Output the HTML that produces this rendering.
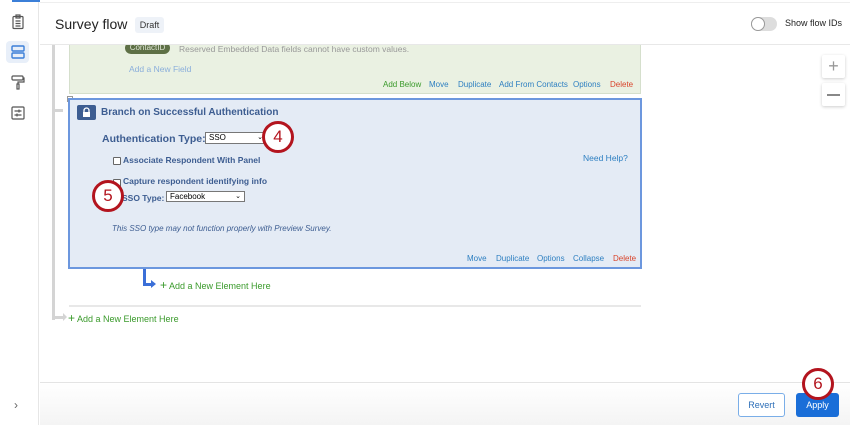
<!DOCTYPE html>
<html><head><style>
*{margin:0;padding:0;box-sizing:border-box}
body{width:850px;height:425px;overflow:hidden;background:#fff;font-family:"Liberation Sans",sans-serif;position:relative}
.abs{position:absolute}
.link{color:#2d7fc1;font-size:8px}
.circ{position:absolute;width:32px;height:32px;border:3px solid #b3141e;border-radius:50%;background:#fff;color:#b3141e;font-size:17px;text-align:center;line-height:26px}
</style></head><body>
<div class="abs" style="left:0;top:0;width:39px;height:425px;border-right:1px solid #e6e6e6;background:#fff"></div>
<div class="abs" style="left:12px;top:0;width:28px;height:2px;background:#3b7fd8"></div>
<div class="abs" style="left:40px;top:2px;width:810px;height:1px;background:#eee"></div>
<svg class="abs" style="left:10px;top:14px" width="16" height="16" viewBox="0 0 16 16" fill="none" stroke="#555" stroke-width="1.2"><rect x="3" y="2.5" width="10" height="12" rx="1"/><rect x="6" y="1" width="4" height="3"/><path d="M5.5 7h5M5.5 9.5h5M5.5 12h5"/></svg>
<div class="abs" style="left:6px;top:41px;width:23px;height:22px;background:#e8eff9;border-radius:4px"></div>
<svg class="abs" style="left:10px;top:44px" width="16" height="16" viewBox="0 0 16 16" fill="none" stroke="#3b7fd8" stroke-width="1.4"><rect x="2" y="2" width="12" height="5" rx="1"/><rect x="2" y="9" width="12" height="5" rx="1"/></svg>
<svg class="abs" style="left:10px;top:74px" width="16" height="16" viewBox="0 0 16 16" fill="none" stroke="#555" stroke-width="1.2"><rect x="2" y="2" width="11" height="4" rx="1"/><path d="M13 4h1v4H8v2"/><rect x="7" y="10" width="2" height="5"/></svg>
<svg class="abs" style="left:10px;top:105px" width="16" height="16" viewBox="0 0 16 16" fill="none" stroke="#555" stroke-width="1.2"><rect x="2" y="2" width="12" height="12" rx="1"/><path d="M4.5 6h7M4.5 10h7M9 4.5v3M7 8.5v3"/></svg>
<div class="abs" style="left:14px;top:398px;font-size:12px;color:#666">›</div>
<div class="abs" style="left:40px;top:3px;width:810px;height:42px;border-bottom:1px solid #e8e8e8;background:#fff;z-index:2">
<div class="abs" style="left:15px;top:13px;font-size:14px;color:#222">Survey flow</div>
<div class="abs" style="left:95px;top:14px;width:29px;height:16px;background:#eef2f8;border-radius:3px;font-size:9px;color:#333;text-align:center;line-height:16px">Draft</div>
<div class="abs" style="left:711px;top:14px;width:26px;height:14px;background:#ddd;border-radius:7px"></div>
<div class="abs" style="left:711px;top:14px;width:14px;height:14px;background:#fff;border:1px solid #999;border-radius:50%"></div>
<div class="abs" style="left:745px;top:15px;font-size:9px;color:#222">Show flow IDs</div>
</div>
<div class="abs" style="left:52px;top:45px;width:3px;height:275px;background:#d4d4d4"></div>
<div class="abs" style="left:55px;top:316px;width:8px;height:3px;background:#d4d4d4"></div>
<div class="abs" style="left:55px;top:109px;width:8px;height:3px;background:#d4d4d4"></div>
<div class="abs" style="left:69px;top:305px;width:572px;height:2px;background:#e8e8e8"></div>
<div class="abs" style="left:69px;top:40px;width:572px;height:54px;background:#eaf1e2;border:1px solid #d5dfcc">
<div class="abs" style="left:55px;top:1px;width:45px;height:12px;background:#5e7046;border-radius:6px;color:#dfe6d5;font-size:8px;text-align:center;line-height:12px">ContactID</div>
<div class="abs" style="left:109px;top:3px;font-size:8.5px;color:#999">Reserved Embedded Data fields cannot have custom values.</div>
<div class="abs" style="left:59px;top:23px;font-size:8.5px;color:#8aaedb">Add a New Field</div>
<div class="abs" style="left:313px;top:39px;font-size:8px;color:#3a9a2b">Add Below</div>
<div class="abs link" style="left:359px;top:39px">Move</div>
<div class="abs link" style="left:388px;top:39px">Duplicate</div>
<div class="abs link" style="left:429px;top:39px">Add From Contacts</div>
<div class="abs link" style="left:503px;top:39px">Options</div>
<div class="abs" style="left:540px;top:39px;font-size:8px;color:#d9442b">Delete</div>
</div>
<div class="abs" style="left:67px;top:96px;width:6px;height:6px;border:1px solid #999;background:#fff"></div>
<div class="abs" style="left:68px;top:98px;width:574px;height:171px;background:#e4ebf5;border:2px solid #6c97de">
<div class="abs" style="left:7px;top:5px;width:19px;height:15px;background:#3d5d91;border-radius:2px"></div>
<svg class="abs" style="left:11px;top:7px" width="11" height="11" viewBox="0 0 11 11"><path d="M3 5V3.5a2.5 2.5 0 0 1 5 0V5" stroke="#fff" fill="none" stroke-width="1.3"/><rect x="2" y="5" width="7" height="5" fill="#fff"/></svg>
<div class="abs" style="left:31px;top:7px;font-size:10px;font-weight:bold;color:#3d5d91">Branch on Successful Authentication</div>
<div class="abs" style="left:32px;top:33px;font-size:10.5px;font-weight:bold;color:#3d5d91">Authentication Type:</div>
<div class="abs" style="left:135px;top:32px;width:62px;height:12px;background:#fff;border:1px solid #777;font-size:8px;padding-left:3px;line-height:10px">SSO<span style="position:absolute;right:3px;font-size:7px">⌄</span></div>
<div class="abs" style="left:43px;top:57px;width:8px;height:8px;border:1px solid #666;background:#fff;border-radius:1px"></div>
<div class="abs" style="left:53px;top:55px;font-size:8.5px;font-weight:bold;color:#3d5d91">Associate Respondent With Panel</div>
<div class="abs link" style="left:513px;top:53px;font-size:8.5px">Need Help?</div>
<div class="abs" style="left:43px;top:79px;width:8px;height:8px;border:1px solid #666;background:#fff;border-radius:1px"></div>
<div class="abs" style="left:53px;top:76px;font-size:8.5px;font-weight:bold;color:#3d5d91">Capture respondent identifying info</div>
<div class="abs" style="left:52px;top:93px;font-size:8.5px;font-weight:bold;color:#3d5d91">SSO Type:</div>
<div class="abs" style="left:96px;top:91px;width:79px;height:11px;background:#fff;border:1px solid #777;font-size:8px;padding-left:3px;line-height:9px">Facebook<span style="position:absolute;right:3px;font-size:7px">⌄</span></div>
<div class="abs" style="left:42px;top:124px;font-size:8px;font-style:italic;color:#3d5d91">This SSO type may not function properly with Preview Survey.</div>
<div class="abs link" style="left:397px;top:154px">Move</div>
<div class="abs link" style="left:426px;top:154px">Duplicate</div>
<div class="abs link" style="left:467px;top:154px">Options</div>
<div class="abs link" style="left:503px;top:154px">Collapse</div>
<div class="abs" style="left:543px;top:154px;font-size:8px;color:#d9442b">Delete</div>
</div>
<div class="circ" style="left:262px;top:121px">4</div>
<div class="circ" style="left:92px;top:180px">5</div>
<div class="abs" style="left:143px;top:269px;width:3px;height:16px;background:#3b6fd8"></div>
<div class="abs" style="left:143px;top:283px;width:9px;height:3px;background:#3b6fd8"></div>
<div class="abs" style="left:151px;top:280px;width:0;height:0;border-left:5px solid #3b6fd8;border-top:4.5px solid transparent;border-bottom:4.5px solid transparent"></div>
<div class="abs" style="left:160px;top:278px;font-size:9px;color:#3a9a2b"><b style="font-size:12px;font-weight:normal">+</b> Add a New Element Here</div>
<div class="abs" style="left:63px;top:313px;width:0;height:0;border-left:4px solid #d4d4d4;border-top:4px solid transparent;border-bottom:4px solid transparent"></div>
<div class="abs" style="left:68px;top:311px;font-size:9px;color:#3a9a2b"><b style="font-size:12px;font-weight:normal">+</b> Add a New Element Here</div>
<div class="abs" style="left:822px;top:55px;width:23px;height:23px;background:#fff;box-shadow:0 1px 3px rgba(0,0,0,.2);border-radius:2px;text-align:center;color:#999;font-size:18px;line-height:22px">+</div>
<div class="abs" style="left:822px;top:83px;width:23px;height:23px;background:#fff;box-shadow:0 1px 3px rgba(0,0,0,.2);border-radius:2px"><div style="margin:11px 5px;height:1.5px;background:#888"></div></div>
<div class="abs" style="left:40px;top:382px;width:810px;height:43px;border-top:1px solid #e4e4e4;background:linear-gradient(#fff,#f4f4f4)"></div>
<div class="abs" style="left:738px;top:393px;width:47px;height:24px;border:1px solid #7aaee8;border-radius:3px;background:#fff;color:#2d6fb8;font-size:9px;text-align:center;line-height:22px">Revert</div>
<div class="abs" style="left:796px;top:393px;width:43px;height:24px;border-radius:3px;background:#1a6ed8;color:#fff;font-size:9px;text-align:center;line-height:24px">Apply</div>
<div class="circ" style="left:802px;top:368px">6</div>
</body></html>
